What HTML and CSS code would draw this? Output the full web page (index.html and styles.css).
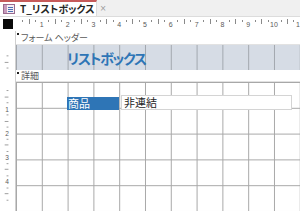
FILE: index.html
```html
<!DOCTYPE html>
<html lang="ja">
<head>
<meta charset="utf-8">
<link rel="stylesheet" href="styles.css">
</head>
<body>
<div class="app">
  <div class="tabbar">
    <div class="tab">
      <svg class="tab-icon" width="12" height="10" viewBox="0 0 12 10">
        <rect x="0.5" y="0.5" width="11" height="9" fill="#f4eef4" stroke="#9a6b8e"/>
        <rect x="1" y="1" width="3" height="8" fill="#c79bbd"/>
        <path d="M5 3.5h5M5 5.5h5M5 7.5h5" stroke="#4a6fb3" stroke-width="1"/>
      </svg>
      <span class="tab-title">T_リストボックス</span>
      <span class="tab-close">×</span>
    </div>
  </div>
  <div class="ruler-row">
    <div class="corner"><div class="corner-box"></div></div>
    <svg class="hruler" width="284" height="14" viewBox="0 0 284 14">
      <path d="M6.5 3v2M19.5 3v2M32.5 3v2M45.5 3v2M58.5 3v2M71.5 3v2M84.5 3v2M97.5 3v2M110.5 3v2M123.5 3v2M135.5 3v2M148.5 3v2M161.5 3v2M174.5 3v2M187.5 3v2M200.5 3v2M213.5 3v2M226.5 3v2M239.5 3v2M252.5 3v2M265.5 3v2M277.5 3v2" stroke="#8a8a8a" stroke-width="1"/>
      <path d="M13.5 2v5M39.5 2v5M65.5 2v5M90.5 2v5M116.5 2v5M142.5 2v5M168.5 2v5M194.5 2v5M219.5 2v5M245.5 2v5M271.5 2v5" stroke="#8a8a8a" stroke-width="1"/>
      <g class="rnum" text-anchor="middle">
        <text x="25.8" y="10">1</text>
        <text x="51.6" y="10">2</text>
        <text x="77.4" y="10">3</text>
        <text x="103.2" y="10">4</text>
        <text x="129" y="10">5</text>
        <text x="154.8" y="10">6</text>
        <text x="180.6" y="10">7</text>
        <text x="206.4" y="10">8</text>
        <text x="232.2" y="10">9</text>
        <text x="258" y="10">10</text>
        <text x="282" y="10">1</text>
      </g>
    </svg>
  </div>
  <div class="sections">
    <svg class="vruler" width="16" height="180" viewBox="0 0 16 180">
      <path d="M7 20.5h2M7 33.5h2M7 57.5h2M7 70.5h2M7 83.5h2M7 96.5h2M7 109.5h2M7 122.5h2M7 135.5h2M7 148.5h2M7 161.5h2M7 174.5h2" stroke="#999999" stroke-width="1"/>
      <path d="M5 27.5h4M5 64.5h4M5 90.5h4M5 115.5h4M5 141.5h4M5 167.5h4" stroke="#999999" stroke-width="1"/>
      <g class="rnum" text-anchor="middle">
        <text x="7.5" y="80">1</text>
        <text x="7.5" y="106">2</text>
        <text x="7.5" y="131.5">3</text>
        <text x="7.5" y="157.5">4</text>
      </g>
    </svg>
    <div class="sec-col">
      <div class="sec-bar sec-bar-hdr"><span class="mark"></span><span class="sec-name">フォーム ヘッダー</span></div>
      <div class="hdr">
        <div class="title">リストボックス</div>
      </div>
      <div class="sec-bar"><span class="mark"></span><span class="sec-name">詳細</span></div>
      <div class="detail">
        <div class="field-row">
          <div class="lbl">商品</div>
          <div class="txt">非連結</div>
        </div>
      </div>
    </div>
  </div>
</div>
</body>
</html>
```

FILE: styles.css
```css
html, body {
  margin: 0;
  padding: 0;
}
body {
  width: 300px;
  height: 211px;
  overflow: hidden;
  background: #ffffff;
  font-family: "Noto Sans CJK JP", "Noto Sans", sans-serif;
  font-feature-settings: "palt";
}
.app {
  width: 300px;
  height: 211px;
  display: flex;
  flex-direction: column;
  overflow: hidden;
}
.tabbar {
  height: 16px;
  background: #f0f0f0;
  border-bottom: 1px solid #dcdcdc;
  display: flex;
  flex: none;
}
.tab {
  width: 96px;
  margin-bottom: -1px;
  padding-bottom: 1px;
  background: #ffffff;
  border-top: 2px solid #c65a5a;
  box-sizing: content-box;
  height: 13px;
  display: flex;
  align-items: center;
  border-right: 1px solid #dcdcdc;
}
.tab-icon {
  margin-left: 3px;
  flex: none;
}
.tab-title {
  margin-left: 5px;
  font-size: 10px;
  font-weight: bold;
  color: #262626;
  line-height: 13px;
  white-space: nowrap;
}
.tab-close {
  margin-left: 5px;
  font-family: "DejaVu Sans", sans-serif;
  font-size: 8px;
  color: #9a9a9a;
  line-height: 13px;
}
.ruler-row {
  height: 14px;
  display: flex;
  flex: none;
  background: #ffffff;
}
.corner {
  width: 16px;
  flex: none;
  display: flex;
  justify-content: flex-start;
  padding-top: 2px;
  box-sizing: border-box;
}
.corner-box {
  width: 10px;
  height: 10px;
  margin-left: 3px;
  background: #0a0a0a;
}
.hruler {
  display: block;
  flex: none;
}
.rnum {
  font-family: "Liberation Sans", sans-serif;
  font-size: 7px;
  fill: #5a5a5a;
}
.sections {
  flex: 1;
  display: flex;
  min-height: 0;
}
.vruler {
  display: block;
  flex: none;
  border-right: 1px solid #d0d0d0;
  box-sizing: content-box;
  width: 15px;
}
.sec-col {
  flex: 1;
  display: flex;
  flex-direction: column;
  min-width: 0;
}
.sec-bar {
  flex: none;
  background: #ffffff;
  border-bottom: 1px solid #e2e2e2;
  display: flex;
  align-items: center;
  box-sizing: border-box;
  height: 12px;
}
.sec-bar-hdr {
  height: 14px;
}
.mark {
  width: 2px;
  height: 2px;
  background: #202020;
  align-self: flex-start;
  margin-top: 2px;
  margin-left: 1px;
  flex: none;
}
.sec-name {
  margin-left: 2px;
  font-size: 9px;
  color: #595959;
  line-height: 10px;
  white-space: nowrap;
}
.hdr {
  height: 25px;
  flex: none;
  background-color: #d6dce5;
  background-image: linear-gradient(to right, #a2a7ae 1px, transparent 1px);
  background-size: 25.8px 100%;
  display: flex;
  align-items: center;
  padding-left: 51px;
  box-sizing: border-box;
}
.title {
  font-size: 14px;
  font-weight: bold;
  color: #2e75b6;
  line-height: 16px;
  white-space: nowrap;
  letter-spacing: -1.3px;
}
.detail {
  flex: 1;
  background-color: #ffffff;
  background-image:
    linear-gradient(to right, #a8a8a8 1px, transparent 1px),
    linear-gradient(to bottom, #a8a8a8 1px, transparent 1px);
  background-size: 25.8px 25.8px;
  padding-top: 13px;
  padding-left: 51px;
  box-sizing: border-box;
}
.field-row {
  display: flex;
  align-items: center;
}
.lbl {
  width: 52px;
  height: 13px;
  background: #2e75b6;
  color: #ffffff;
  font-size: 11px;
  line-height: 13px;
  padding-left: 1px;
  box-sizing: border-box;
  margin-top: 1px;
}
.txt {
  width: 171px;
  height: 15px;
  margin-left: 2px;
  background: #ffffff;
  border: 1px solid #d4d4d4;
  box-sizing: border-box;
  font-size: 11px;
  line-height: 13px;
  color: #262626;
  padding-left: 2px;
}
```
